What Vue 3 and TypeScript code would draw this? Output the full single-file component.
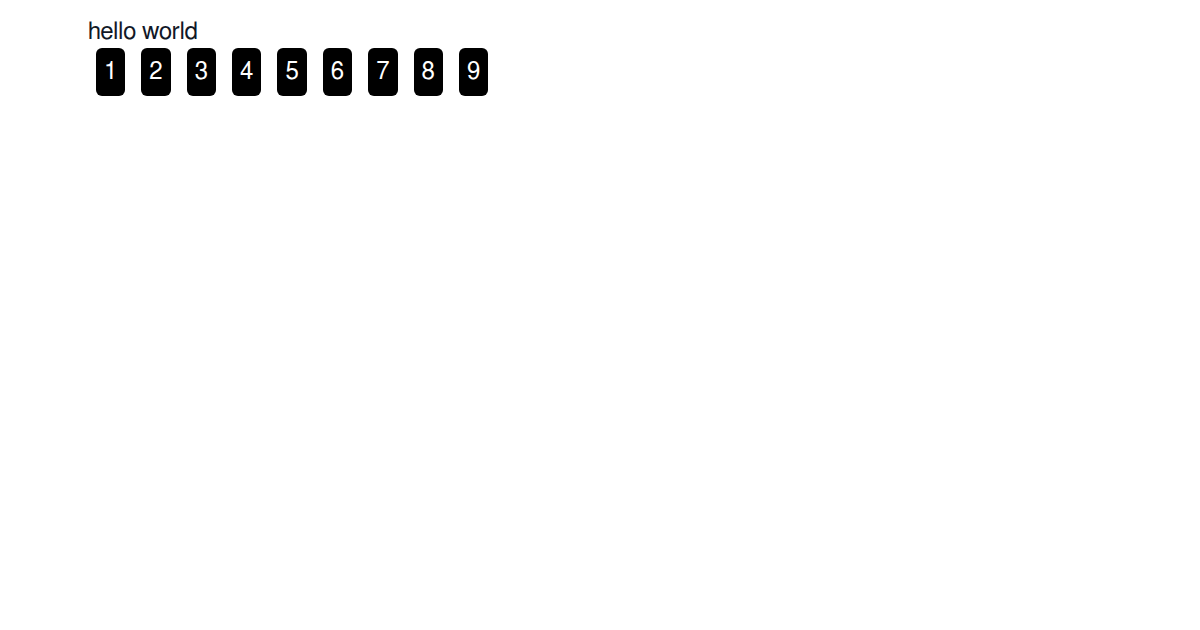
<script setup lang="ts">
const numbers: number[] = [1, 2, 3, 4, 5, 6, 7, 8, 9]
</script>

<template>
  <main class="page">
    <div>hello world</div>
    <div class="row">
      <button v-for="n in numbers" :key="n" type="button" class="key">{{ n }}</button>
    </div>
  </main>
</template>

<style scoped>
.page {
  padding: 16px 88px;
  color: #111827;
  font-family: FreeSans, "Liberation Sans", Arial, sans-serif;
  font-size: 24px;
  line-height: 32px;
}

.row {
  display: flex;
  flex-wrap: wrap;
  gap: 16px;
  padding: 0 8px;
}

.key {
  padding: 8px;
  border: 0;
  border-radius: 6px;
  background: #000;
  color: #fff;
  font: inherit;
  cursor: pointer;
}
</style>

<style>
body {
  background: #fff;
}
</style>
